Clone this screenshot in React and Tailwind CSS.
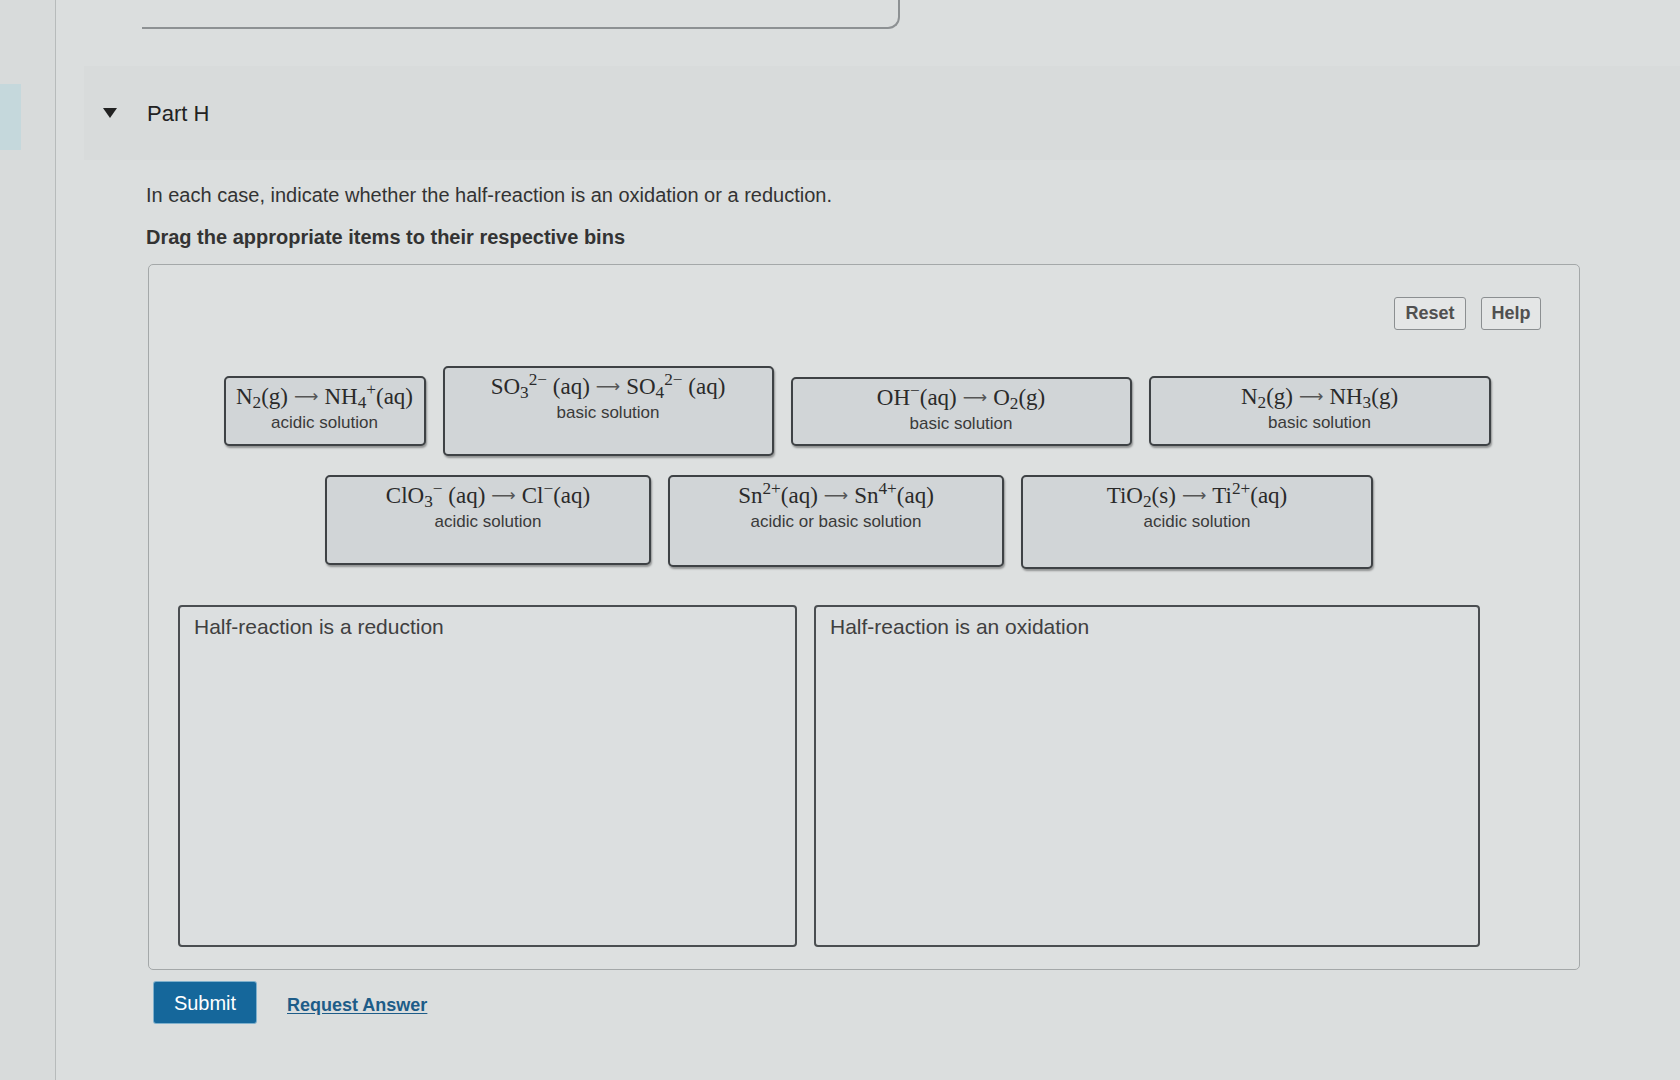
const sans = "font-['Liberation_Sans',Arial,sans-serif]";
const serif = "font-['Liberation_Serif','Times_New_Roman',serif]";

const Arrow = () => (
    <span className="mx-[6px] font-['DejaVu_Sans',sans-serif] text-[17px] text-[#555] relative top-[-2px]">⟶</span>
);

const items = [
    {
        w: 'w-[202px] h-[70px]',
        formula: (
            <>
                N<sub>2</sub>(g)<Arrow />NH<sub>4</sub><sup>+</sup>(aq)
            </>
        ),
        note: 'acidic solution',
    },
    {
        w: 'w-[331px] h-[90px]',
        formula: (
            <>
                SO<sub>3</sub><sup>2−</sup> (aq)<Arrow />SO<sub>4</sub><sup>2−</sup> (aq)
            </>
        ),
        note: 'basic solution',
    },
    {
        w: 'w-[341px] h-[69px]',
        formula: (
            <>
                OH<sup>−</sup>(aq)<Arrow />O<sub>2</sub>(g)
            </>
        ),
        note: 'basic solution',
    },
    {
        w: 'w-[342px] h-[70px]',
        formula: (
            <>
                N<sub>2</sub>(g)<Arrow />NH<sub>3</sub>(g)
            </>
        ),
        note: 'basic solution',
    },
];

const items2 = [
    {
        w: 'w-[326px] h-[90px]',
        formula: (
            <>
                ClO<sub>3</sub><sup>−</sup> (aq)<Arrow />Cl<sup>−</sup>(aq)
            </>
        ),
        note: 'acidic solution',
    },
    {
        w: 'w-[336px] h-[92px]',
        formula: (
            <>
                Sn<sup>2+</sup>(aq)<Arrow />Sn<sup>4+</sup>(aq)
            </>
        ),
        note: 'acidic or basic solution',
    },
    {
        w: 'w-[352px] h-[94px]',
        formula: (
            <>
                TiO<sub>2</sub>(s)<Arrow />Ti<sup>2+</sup>(aq)
            </>
        ),
        note: 'acidic solution',
    },
];

const Card = ({ item }) => (
    <div
        className={`${item.w} flex flex-col items-center pt-[5px] bg-[#d1d5d7] border-2 border-[#3e4245] rounded-[5px] shadow-[1px_2px_2px_rgba(0,0,0,0.35)]`}
    >
        <div className={`${serif} text-[23px] leading-[28px] text-[#2a2a2a]`}>{item.formula}</div>
        <div className={`${sans} text-[17px] leading-[22px] text-[#3a3a3a]`}>{item.note}</div>
    </div>
);

const Bin = ({ label, w }) => (
    <div className={`${w} h-[342px] border-2 border-[#4a4e51] rounded-[4px] bg-[#dcdfe0] px-[14px] pt-[4px]`}>
        <span className={`${sans} text-[21px] text-[#404040]`}>{label}</span>
    </div>
);

export default function App() {
    return (
        <div className={`${sans} min-h-screen w-full bg-[#dbdede] flex`}>
            <div className="w-[56px] shrink-0 border-r border-[#b7bbbb] bg-[#d8dbdb] pt-[84px]">
                <div className="w-[21px] h-[66px] bg-[#c5d8dc]" />
            </div>

            <div className="flex-1 flex flex-col">
                <div className="ml-[86px] w-[758px] h-[29px] border-b-2 border-r-2 border-[#8d9193] rounded-br-[12px]" />

                <div className="ml-[28px] mt-[37px] h-[94px] bg-[#d8dbdb] flex items-center pl-[19px]">
                    <svg width="14" height="10" viewBox="0 0 14 10">
                        <path d="M0 0 L14 0 L7 10 Z" fill="#222" />
                    </svg>
                    <span className="ml-[30px] text-[22px] text-[#222]">Part H</span>
                </div>

                <p className="ml-[90px] mt-[20px] text-[20px] text-[#333]">
                    In each case, indicate whether the half-reaction is an oxidation or a reduction.
                </p>
                <p className="ml-[90px] mt-[12px] text-[20px] font-bold text-[#333]">
                    Drag the appropriate items to their respective bins
                </p>

                <div className="ml-[92px] mt-[12px] w-[1432px] h-[706px] border border-[#a4a8a9] rounded-[5px] bg-[#dde0e0] flex flex-col">
                    <div className="flex justify-end gap-[15px] pr-[38px] pt-[32px]">
                        <button className="w-[72px] h-[33px] border border-[#8b8f91] rounded-[3px] bg-[#e4e6e6] text-[18px] font-bold text-[#505050]">
                            Reset
                        </button>
                        <button className="w-[60px] h-[33px] border border-[#8b8f91] rounded-[3px] bg-[#e4e6e6] text-[18px] font-bold text-[#505050]">
                            Help
                        </button>
                    </div>

                    <div className="flex justify-center items-center gap-[17px] mt-[36px] pr-[14px]">
                        {items.map((it, i) => (
                            <Card key={i} item={it} />
                        ))}
                    </div>
                    <div className="flex justify-center items-start gap-[17px] mt-[19px] pr-[30px]">
                        {items2.map((it, i) => (
                            <Card key={i} item={it} />
                        ))}
                    </div>

                    <div className="flex gap-[17px] mt-[36px] pl-[29px]">
                        <Bin label="Half-reaction is a reduction" w="w-[619px]" />
                        <Bin label="Half-reaction is an oxidation" w="w-[666px]" />
                    </div>
                </div>

                <div className="ml-[98px] mt-[12px] flex items-center gap-[31px]">
                    <button className="w-[102px] h-[41px] bg-[#15679b] rounded-[2px] text-white text-[20px] shadow-[0_0_0_1px_#7fb0cc]">
                        Submit
                    </button>
                    <a href="#" className="text-[18px] font-bold text-[#1d5c88] underline underline-offset-2 mt-[6px]">
                        Request Answer
                    </a>
                </div>
            </div>
        </div>
    );
}
